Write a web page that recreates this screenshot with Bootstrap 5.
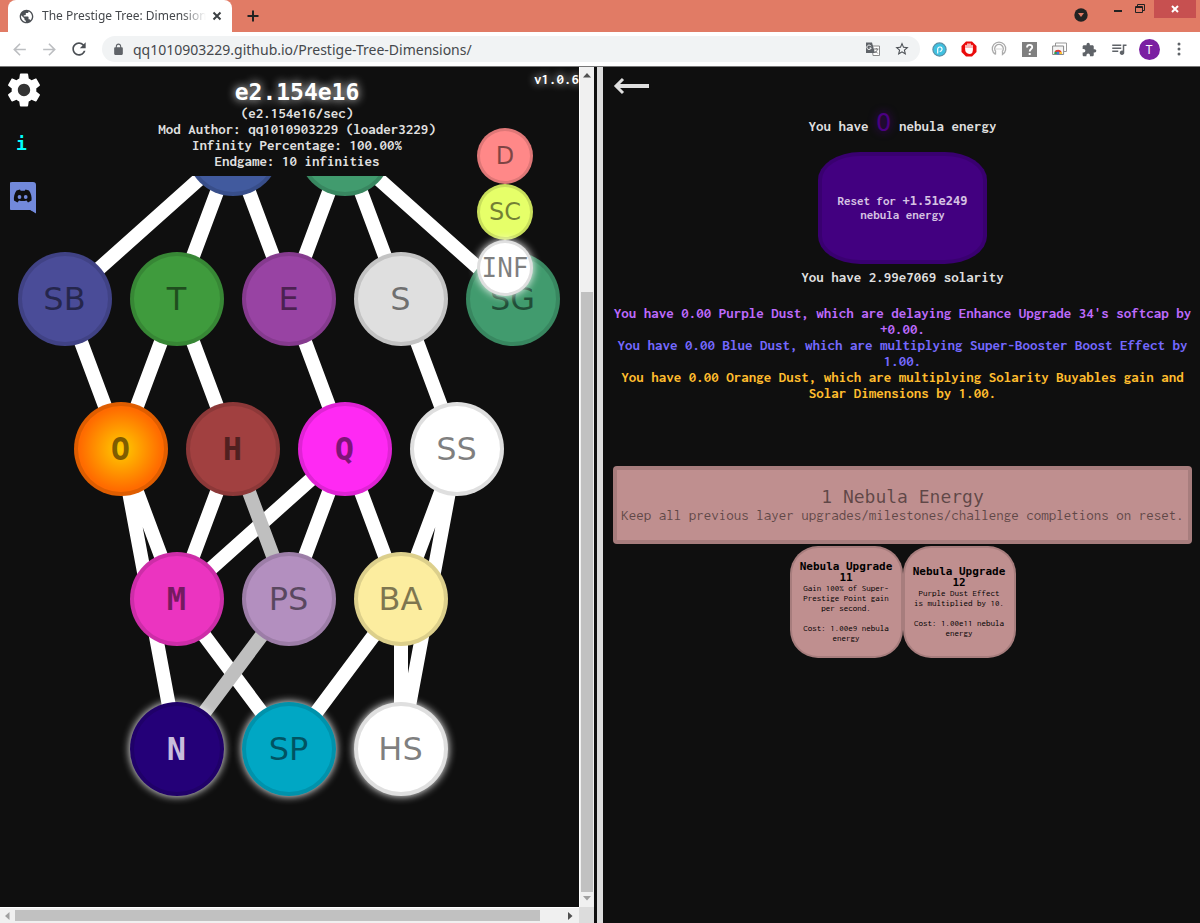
<!DOCTYPE html>
<html lang="en">
<head>
<meta charset="utf-8">
<meta name="viewport" content="width=device-width, initial-scale=1">
<title>The Prestige Tree: Dimensions</title>
<link href="https://cdn.jsdelivr.net/npm/bootstrap@5.3.0/dist/css/bootstrap.min.css" rel="stylesheet">
<style>
  :root { --ink: #dfdfdf; --page: #0f0f0f; --wide: "DejaVu Sans Mono", "Liberation Mono", monospace; --narrow: Inconsolata, "Noto Sans Mono CJK JP", "Liberation Mono", monospace; }
  body { background: var(--page); font-family: "Noto Sans", "Open Sans", sans-serif; }
  button { background: none; border: 0; padding: 0; color: inherit; }
  svg { display: block; flex: none; }

  /* browser frame */
  .titlebar { height: 32px; background: #e17b65; }
  .tab-active { width: 224px; height: 32px; margin-left: 8px; background: #fff; border-radius: 8px 8px 0 0; font-size: 12px; color: #45484c; padding: 0 8px 0 11px; }
  .tab-title { -webkit-mask-image: linear-gradient(90deg, #000 85%, transparent); mask-image: linear-gradient(90deg, #000 85%, transparent); }
  .win-close { width: 42px; height: 18px; background: #c75050; color: #fff; }
  .toolbar { height: 34px; background: #fff; color: #5f6368; padding-right: 6px; }
  .tool { width: 30px; height: 30px; display: flex; align-items: center; justify-content: center; }
  .omnibox { height: 26px; background: #f1f3f4; border-radius: 13px; padding: 0 3px 0 10px; }
  .omnibox input { border: 0; background: none; outline: 0; font-size: 14px; color: #45484c; padding: 0; }
  .avatar { width: 21px; height: 21px; border-radius: 50%; background: #7b1fa2; color: #fff; font-size: 12px; line-height: 21px; }

  /* page */
  .game { color: var(--ink); font: bold 15px/16px var(--narrow); border-top: 1px solid #777; }
  .tree-pane { flex: 0 0 49.5%; display: grid; grid-template: minmax(0, 1fr) 16px / minmax(0, 1fr) 15px; }
  .tree-view { position: relative; overflow: hidden; }
  .overlay-head { position: relative; z-index: 2; height: 109px; padding: 12px 0 0 15px; background: var(--page); }
  .points { font: bold 23px/26px var(--wide); color: #fff; text-shadow: 0 0 10px #fff; }
  .version { position: absolute; z-index: 3; top: 4px; right: 0; color: #fff; text-shadow: 0 0 8px #fff; }
  .side-links { position: absolute; z-index: 3; top: 5px; left: 6px; }
  .side-nodes { position: absolute; z-index: 3; top: 61px; right: 46px; }
  .info { font: bold 18px/20px var(--wide); color: #0ff; margin: 26px 0 28px 10px; }

  .canvas-box { position: relative; margin: -74px 2px 0 0; }
  .links { position: absolute; top: 0; left: 50%; margin-left: -288px; }
  .tree-row { display: flex; justify-content: center; gap: 18px; margin-bottom: 56px; position: relative; }
  .node { flex: none; width: 94px; height: 94px; border-radius: 50%; border: 4px solid rgba(0,0,0,.125); background-clip: border-box; background-origin: border-box; color: rgba(0,0,0,.5); font: 32px/1 "DejaVu Sans", sans-serif; display: flex; align-items: center; justify-content: center; }
  .node.mini { width: 56px; height: 56px; border-width: 3px; font-size: 24px; }
  .node.mono { font-family: var(--wide); font-size: 26px; }
  .node.one { font-family: var(--wide); font-weight: bold; }
  .node.glow { box-shadow: 0 0 8px #fff; }
  .c-b { background-color: #415a9e; } .c-g { background-color: #419b6e; } .c-sb { background-color: #4a4c98; }
  .c-t { background-color: #3f9b3d; } .c-e { background-color: #9843a3; } .c-s { background-color: #dfdfdf; }
  .c-o { background-image: radial-gradient(#ffcc00, #ff6b00 62%); } .c-h { background-color: #a14040; }
  .c-q { background-color: #ff29f3; } .c-w { background-color: #fff; } .c-m { background-color: #eb34c0; }
  .c-ps { background-color: #b38fbf; } .c-ba { background-color: #fced9f; } .c-n { background-color: #240078; color: #c8bddd; }
  .c-sp { background-color: #00a7c4; } .c-d { background-color: #ff8888; } .c-sc { background-color: #e6ff69; }

  .bar { background: #f0f0f0; }
  .bar-v { padding: 6px 1px; border-left: 1px solid #fff; }
  .bar-h { padding: 2px 6px 2px 5px; border-top: 1px solid #fff; gap: 5px; }
  .thumb { background: #c1c1c1; }
  .corner { background: #dcdcdc; }
  .divider { width: 6px; margin-left: 3px; background: #dcdcdc; }

  .layer-pane { padding: 9px 8px 10px 10px; overflow: hidden; }
  .amount-line { line-height: 28px; margin: 15px 0 12px; }
  .nebula-amount { font: 24px/1 "DejaVu Sans", sans-serif; color: #4b0082; text-shadow: 0 0 8px #4b0082; }
  .reset-btn { width: 169px; height: 112px; border-radius: 25%; background: #420080; border: 4px solid rgba(0,0,0,.125); background-clip: border-box; background-origin: border-box; color: #d6c3e3; font: bold 13px/14px var(--narrow); }
  .reset-btn b { font: bold 12px/14px var(--wide); }
  .solarity { margin: 5px 0 20px; }
  .dust-purple { color: #bd6afc; } .dust-blue { color: #7569ff; } .dust-orange { color: #ffbd2e; }
  .milestone { margin: 65px 0 2px; min-height: 78px; background: #bf8f8f; border: 4px solid rgba(0,0,0,.125); border-radius: 4px; color: rgba(0,0,0,.5); font-weight: normal; }
  .milestone h2 { font: 18px/20px var(--wide); margin: 0; }
  .upgrade { width: 113px; height: 112px; border-radius: 28px; background: #bf8f8f; border: 2px solid rgba(0,0,0,.125); color: #000; font: 9px/10px var(--narrow); padding: 0 8px; }
  .upgrade h3 { font: bold 11px/11px var(--wide); margin: 0; }
</style>
</head>
<body class="vh-100 d-flex flex-column overflow-hidden">

<header class="flex-shrink-0">
  <div class="titlebar d-flex">
    <div class="tab-active d-flex align-items-center">
      <svg class="me-2" width="15" height="15" viewBox="1 1 22 22" fill="#4b4f54"><path d="M12 2C6.480 2 2 6.480 2 12s4.480 10 10 10 10-4.480 10-10S17.520 2 12 2zm-1 17.930c-3.950-.49-7-3.850-7-7.930 0-.62.08-1.210.21-1.790L9 15v1c0 1.100.9 2 2 2v1.930zm6.900-2.540c-.26-.81-1-1.390-1.900-1.390h-1v-3c0-.55-.45-1-1-1H8v-2h2c.55 0 1-.45 1-1V7h2c1.100 0 2-.9 2-2v-.41c2.930 1.190 5 4.060 5 7.410 0 2.080-.8 3.970-2.100 5.390z"/></svg>
      <span class="tab-title flex-grow-1 text-nowrap overflow-hidden">The Prestige Tree: Dimension</span>
      <button class="ms-1" aria-label="Close tab"><svg width="14" height="14" viewBox="0 0 14 14" stroke="#3c4043" stroke-width="2"><path d="M3.500 3.500l7 7M10.500 3.500l-7 7"/></svg></button>
    </div>
    <button class="ms-2 ps-1" aria-label="New tab"><svg width="18" height="18" viewBox="0 0 18 18" stroke="#222" stroke-width="2"><path d="M9 3.500v11M3.500 9h11"/></svg></button>
    <div class="ms-auto d-flex align-items-start">
      <button class="mt-2 me-4" aria-label="Search tabs"><svg width="14" height="14" viewBox="0 0 14 14"><circle cx="7" cy="7" r="6.700" fill="#222"/><path d="M4 5h6l-3 4z" fill="#e17b65"/></svg></button>
      <button class="me-2" aria-label="Minimize"><svg width="14" height="18" viewBox="0 0 14 18"><path d="M2 10h8v2H2z" fill="#222"/></svg></button>
      <button class="me-2" aria-label="Restore"><svg width="12" height="18" viewBox="0 0 12 18" fill="none" stroke="#222"><path d="M1.500 6.500h7v6h-7zM1 7.500h8M3.500 6V4.500h7v6H9"/></svg></button>
      <button class="win-close d-flex justify-content-center align-items-center me-1" aria-label="Close window"><svg width="10" height="10" viewBox="0 0 10 10" stroke="#fff" stroke-width="2"><path d="M2 2l6 6M8 2L2 8"/></svg></button>
    </div>
  </div>
  <div class="toolbar d-flex align-items-center">
    <button class="tool ms-1" aria-label="Back"><svg width="19" height="19" viewBox="0 0 24 24" fill="#bcbec1"><path d="M20 11H7.830l5.590-5.590L12 4l-8 8 8 8 1.410-1.410L7.830 13H20v-2z"/></svg></button>
    <button class="tool" aria-label="Forward"><svg width="19" height="19" viewBox="0 0 24 24" fill="#bcbec1"><path d="M12 4l-1.410 1.410L16.170 11H4v2h12.170l-5.580 5.590L12 20l8-8z"/></svg></button>
    <button class="tool" aria-label="Reload"><svg width="20" height="20" viewBox="0 0 24 24" fill="#4b4f54"><path d="M17.650 6.350C16.200 4.900 14.210 4 12 4c-4.420 0-7.990 3.580-7.990 8s3.570 8 7.990 8c3.730 0 6.840-2.550 7.730-6h-2.080c-.82 2.330-3.040 4-5.650 4-3.310 0-6-2.690-6-6s2.690-6 6-6c1.660 0 3.140.69 4.220 1.780L13 11h7V4l-2.350 2.350z"/></svg></button>
    <div class="omnibox flex-grow-1 d-flex align-items-center ms-2 me-1">
      <svg class="me-2" width="13" height="13" viewBox="0 0 24 24" fill="#5f6368"><path d="M18 8h-1V6c0-2.760-2.240-5-5-5S7 3.240 7 6v2H6c-1.100 0-2 .9-2 2v10c0 1.100.9 2 2 2h12c1.100 0 2-.9 2-2V10c0-1.100-.9-2-2-2zM9 8V6a3 3 0 0 1 6 0v2z"/></svg>
      <input class="flex-grow-1" type="text" aria-label="Address" value="qq1010903229.github.io/Prestige-Tree-Dimensions/">
      <button class="tool" aria-label="Translate"><svg width="15" height="14" viewBox="0 0 15 14"><path d="M7 4h7.500v9.500H8z" fill="#fff" stroke="#888"/><path d="M1 .5h6L10 11H1z" fill="#5f6368"/><path d="M6 4.200A2.200 2.200 0 1 0 6.200 6H4.500" fill="none" stroke="#fff"/><path d="M9 7h4.500M11.300 6v1M12.500 7c-.5 2-1.500 3-2.500 4M10.300 9l2.500 2.500" fill="none" stroke="#777"/></svg></button>
      <button class="tool" aria-label="Bookmark"><svg width="16" height="16" viewBox="0 0 24 24" fill="#4b4f54"><path d="M22 9.240l-7.190-.62L12 2 9.190 8.630 2 9.240l5.460 4.730L5.820 21 12 17.270 18.180 21l-1.630-7.030L22 9.240zM12 15.400l-3.760 2.270 1-4.280-3.320-2.880 4.380-.38L12 6.100l1.710 4.040 4.380.38-3.320 2.880 1 4.280L12 15.400z"/></svg></button>
    </div>
    <button class="tool" aria-label="Extension P"><svg width="15" height="15" viewBox="0 0 15 15"><circle cx="7.500" cy="7.500" r="6.600" fill="#3fc0e0" stroke="#5a8fa5" stroke-width="1.200"/><path d="M5.700 11.500V6.800a2.200 2.200 0 1 1 2 2.600" fill="none" stroke="#fff" stroke-width="1.200"/></svg></button>
    <button class="tool" aria-label="Ad blocker"><svg width="16" height="16" viewBox="0 0 16 16"><path d="M5 .5h6L15.500 5v6L11 15.500H5L.5 11V5z" fill="#ea0b0b"/><path d="M5 8V4.500M7 8V3M9 8V3M11 9V4.500" stroke="#fff" stroke-width="1.400" stroke-linecap="round"/><path d="M4.300 7h7.400v3c0 2-1.300 3-3 3-2 0-3-.7-4.400-3z" fill="#fff"/></svg></button>
    <button class="tool" aria-label="Extension"><svg width="16" height="16" viewBox="0 0 16 16" fill="none" stroke="#aaa"><path d="M4.500 13.500a6.700 6.700 0 1 1 7 0V11M4.500 13.500V11M5 10.800a4.300 4.300 0 1 1 6 0" stroke-width="1.300"/><path d="M5.500 8h1M7.500 8h1M9.500 8h1"/></svg></button>
    <button class="tool" aria-label="Help"><svg width="15" height="15" viewBox="0 0 15 15"><path d="M0 0h15v15H0z" fill="#808080"/><path d="M5 5.500C5 2 10.500 2.200 10.200 5.300 10 7 7.700 7.200 7.700 9.500" fill="none" stroke="#fff" stroke-width="1.800"/><path d="M6.700 11h2v2h-2z" fill="#fff"/></svg></button>
    <button class="tool" aria-label="Screenshot"><svg width="15" height="14" viewBox="0 0 15 14"><path d="M3.500 4V1h11v8.500H12" fill="#fff" stroke="#999"/><path d="M.6 4h11v8.500H.6z" fill="#f4f4f4" stroke="#888"/><path d="M2.200 12a4 4 0 0 1 3.800-4l.2 4z" fill="#2a9d4a"/><path d="M2.500 10a4 4 0 0 1 7.200 0H6z" fill="#e33b2e"/><path d="M9.800 10l.3 2H6V10z" fill="#fbc02d"/><circle cx="6" cy="11" r="1.500" fill="#3c78e0"/></svg></button>
    <button class="tool" aria-label="Extensions"><svg width="15" height="15" viewBox="1 0 23 23" fill="#5f6368"><path d="M20.500 11H19V7c0-1.100-.9-2-2-2h-4V3.500a2.500 2.500 0 0 0-5 0V5H4c-1.100 0-2 .9-2 2v3.800h1.500a2.700 2.700 0 0 1 0 5.400H2V20c0 1.100.9 2 2 2h3.800v-1.500a2.700 2.700 0 0 1 5.400 0V22H17c1.100 0 2-.9 2-2v-4h1.500a2.500 2.500 0 0 0 0-5z"/></svg></button>
    <button class="tool" aria-label="Media"><svg width="18" height="18" viewBox="0 0 24 24" fill="#5f6368"><path d="M15 6H3v2h12V6zm0 4H3v2h12v-2zM3 16h8v-2H3v2zM17 6v8.180c-.31-.11-.65-.18-1-.18-1.660 0-3 1.340-3 3s1.340 3 3 3 3-1.340 3-3V8h3V6h-5z"/></svg></button>
    <button class="tool" aria-label="Profile"><span class="avatar">T</span></button>
    <button class="tool" aria-label="Menu"><svg width="4" height="14" viewBox="0 0 4 14" fill="#5f6368"><circle cx="2" cy="2" r="1.500"/><circle cx="2" cy="7" r="1.500"/><circle cx="2" cy="12" r="1.500"/></svg></button>
  </div>
</header>

<main class="game flex-grow-1 d-flex overflow-hidden">
  <section class="tree-pane">
    <div class="tree-view">
      <div class="overlay-head text-center">
        <div class="points">e2.154e16</div>
        <div>(e2.154e16/sec)</div>
        <div>Mod Author: qq1010903229 (loader3229)</div>
        <div>Infinity Percentage: 100.00%</div>
        <div>Endgame: 10 infinities</div>
      </div>
      <div class="version">v1.0.6</div>
      <nav class="side-links d-flex flex-column align-items-start">
        <button aria-label="Settings"><svg width="36" height="36" viewBox="1.500 1.500 21 21" fill="#fff"><circle cx="12" cy="12" r="4.500" fill="#333"/><path d="M19.140 12.940c.04-.3.06-.61.06-.94 0-.32-.02-.64-.07-.94l2.030-1.580c.18-.14.23-.41.12-.61l-1.920-3.320c-.12-.22-.37-.29-.59-.22l-2.390.96c-.5-.38-1.030-.7-1.620-.94l-.36-2.540c-.04-.24-.24-.41-.48-.41h-3.840c-.24 0-.43.17-.47.41l-.36 2.540c-.59.24-1.130.57-1.620.94l-2.390-.96c-.22-.08-.47 0-.59.22L2.740 8.870c-.12.21-.08.47.12.61l2.030 1.580c-.05.3-.09.63-.09.94s.02.64.07.94l-2.030 1.580c-.18.14-.23.41-.12.61l1.920 3.320c.12.22.37.29.59.22l2.390-.96c.5.38 1.030.7 1.620.94l.36 2.540c.05.24.24.41.48.41h3.840c.24 0 .44-.17.47-.41l.36-2.540c.59-.24 1.130-.56 1.620-.94l2.390.96c.22.08.47 0 .59-.22l1.920-3.320c.12-.22.07-.47-.12-.61l-2.010-1.580zM12 15.600c-1.980 0-3.600-1.620-3.600-3.600s1.620-3.600 3.600-3.600 3.600 1.620 3.600 3.600-1.620 3.600-3.600 3.600z"/></svg></button>
        <button class="info">i</button>
        <a href="#" class="ms-1" aria-label="Discord"><svg width="28" height="32" viewBox="1 0 28 32"><path d="M3 0h21a3 3 0 0 1 3 3v28l-6-3H3a3 3 0 0 1-3-3V3a3 3 0 0 1 3-3z" fill="#7289da"/><path d="M0 28h20l7 4H0z" fill="#0f0f0f"/><path d="M19 26l8 5.500V24z" fill="#7289da"/><path d="M7.500 8.500l3.500-1 .7 1.200h4l.8-1.200 3.500 1c2 3 3 6.500 2.500 10l-3.500 2-1.500-2c-2.500.7-5 .7-7.500 0l-1.500 2-3.500-2c-.5-3.500.5-7 2.500-10z" fill="#0f0f0f"/><circle cx="10.500" cy="15" r="1.900" fill="#7289da"/><circle cx="16.700" cy="15" r="1.900" fill="#7289da"/></svg></a>
      </nav>
      <div class="side-nodes">
        <button class="node mini c-d">D</button>
        <button class="node mini c-sc">SC</button>
        <button class="node mini mono c-w glow">INF</button>
      </div>
      <div class="canvas-box">
        <svg class="links" width="576" height="700" viewBox="0 0 576 700" stroke="#fff" stroke-width="14">
          <path d="M232 47L64 197M232 47L176 197M232 47L288 197M344 47L288 197M344 47L400 197M344 47L512 197"/>
          <path d="M64 197L120 347M176 197L120 347M176 197L232 347M288 197L344 347M400 197L456 347"/>
          <path d="M120 347L176 497M120 347L176 647M232 347L176 497M344 347L176 497M344 347L288 497M344 347L400 497M456 347L400 497M456 347L400 647"/>
          <path d="M176 497L288 647M400 497L288 647M400 497L400 647"/>
          <path d="M232 347L288 497M288 497L176 647" stroke="#bfbfbf"/>
        </svg>
        <div class="tree-row"><button class="node c-b" aria-label="Boosters"></button><button class="node c-g" aria-label="Generators"></button></div>
        <div class="tree-row"><button class="node c-sb">SB</button><button class="node c-t">T</button><button class="node c-e">E</button><button class="node c-s">S</button><button class="node c-g">SG</button></div>
        <div class="tree-row"><button class="node c-o one">O</button><button class="node c-h one">H</button><button class="node c-q one">Q</button><button class="node c-w">SS</button></div>
        <div class="tree-row"><button class="node c-m one">M</button><button class="node c-ps">PS</button><button class="node c-ba">BA</button></div>
        <div class="tree-row"><button class="node c-n glow one">N</button><button class="node c-sp glow">SP</button><button class="node c-w glow">HS</button></div>
      </div>
    </div>
    <div class="bar bar-v d-flex flex-column align-items-center">
      <svg width="8" height="5" viewBox="0 0 8 5"><path d="M0 4.500h8L4 0z" fill="#505050"/></svg>
      <div class="flex-grow-1"></div>
      <div class="thumb w-100 mb-1" style="height:72.5%"></div>
      <svg width="8" height="5" viewBox="0 0 8 5"><path d="M0 0h8L4 4.500z" fill="#a0a0a0"/></svg>
    </div>
    <div class="bar bar-h d-flex align-items-center">
      <svg width="5" height="8" viewBox="0 0 5 8"><path d="M4.500 0v8L0 4z" fill="#a0a0a0"/></svg>
      <div class="thumb h-100" style="width:92.5%"></div>
      <svg class="ms-auto" width="5" height="8" viewBox="0 0 5 8"><path d="M0 0v8l4.500-4z" fill="#505050"/></svg>
    </div>
    <div class="corner"></div>
  </section>
  <div class="divider flex-shrink-0"></div>

  <section class="layer-pane flex-grow-1 d-flex flex-column align-items-center text-center">
    <button class="align-self-start" aria-label="Back to tree"><svg width="38" height="20" viewBox="0 0 38 20" fill="none" stroke="#dfdfdf"><path d="M3 10h33" stroke-width="4"/><path d="M10 3L3 10l7 7" stroke-width="3"/></svg></button>
    <div class="amount-line">You have <span class="nebula-amount">0</span> nebula energy</div>
    <button class="reset-btn">Reset for <b>+1.51e249</b><br>nebula energy</button>
    <div class="solarity">You have 2.99e7069 solarity</div>
    <div class="w-100">
      <div class="dust-purple">You have 0.00 Purple Dust, which are delaying Enhance Upgrade 34's softcap by +0.00.</div>
      <div class="dust-blue">You have 0.00 Blue Dust, which are multiplying Super-Booster Boost Effect by 1.00.</div>
      <div class="dust-orange">You have 0.00 Orange Dust, which are multiplying Solarity Buyables gain and Solar Dimensions by 1.00.</div>
    </div>
    <div class="milestone w-100 d-flex flex-column justify-content-center">
      <h2>1 Nebula Energy</h2>
      <div>Keep all previous layer upgrades/milestones/challenge completions on reset.</div>
    </div>
    <div class="d-flex">
      <button class="upgrade"><h3>Nebula Upgrade 11</h3>Gain 100% of Super-Prestige Point gain per second.<br><br>Cost: 1.00e9 nebula energy</button>
      <button class="upgrade"><h3>Nebula Upgrade 12</h3>Purple Dust Effect is multiplied by 10.<br><br>Cost: 1.00e11 nebula energy</button>
    </div>
  </section>
</main>
<script src="https://cdn.jsdelivr.net/npm/bootstrap@5.3.0/dist/js/bootstrap.bundle.min.js"></script>
</body>
</html>
